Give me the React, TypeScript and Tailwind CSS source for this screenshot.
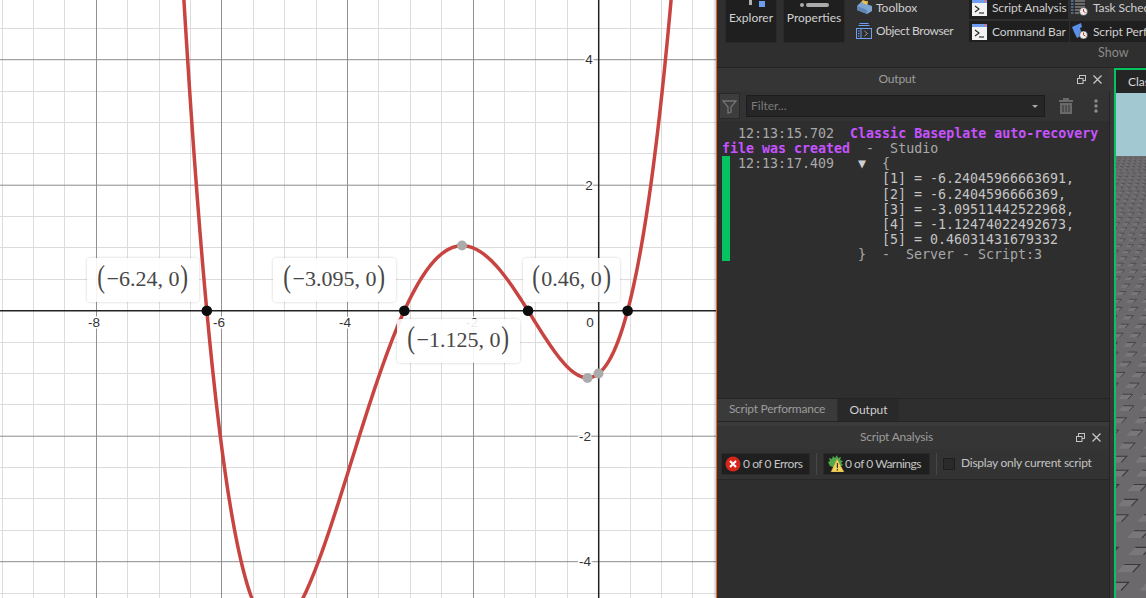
import React from "react";

const X = (v: number) => 598.7 + 62.8 * v;
const Y = (v: number) => 310.7 - 62.75 * v;
const snap = (p: number) => Math.floor(p) + 0.5;
const f = (x: number) => 0.1 * (x + 6.24046) * (x + 3.09511) * (x + 1.12474) * (x - 0.46031);

function range(a: number, b: number, step: number) {
  const out: number[] = [];
  for (let v = a; v <= b + 1e-6; v += step) out.push(v);
  return out;
}

function curvePath() {
  let d = "";
  for (let px = 170; px <= 690; px += 1.5) {
    const v = (px - 598.7) / 62.8;
    d += `${d ? "L" : "M"}${px.toFixed(1)} ${Y(f(v)).toFixed(2)} `;
  }
  return d;
}

function AxisText({ x, y, children }: { x: number; y: number; children: string }) {
  return (
    <text x={x} y={y} textAnchor="middle" fontFamily="Liberation Sans, sans-serif" fontSize="13.5" fill="#333" stroke="#fff" strokeWidth="3" paintOrder="stroke">
      {children}
    </text>
  );
}

function Graph() {
  const minorX = range(-9.5, 1.5, 0.5).filter((v) => Math.abs(v % 2) > 0.01);
  const majorX = [-8, -6, -4, -2];
  const minorY = range(-5, 5, 0.5).filter((v) => Math.abs(v % 2) > 0.01);
  const majorY = [-4, -2, 2, 4];
  return (
    <svg width="716" height="598" className="block">
      <rect width="716" height="598" fill="#fff" />
      {minorX.map((v) => (
        <line key={v} x1={snap(X(v))} x2={snap(X(v))} y1="0" y2="598" stroke="#dcdcdc" />
      ))}
      {minorY.map((v) => (
        <line key={v} y1={snap(Y(v))} y2={snap(Y(v))} x1="0" x2="716" stroke="#dcdcdc" />
      ))}
      {majorX.map((v) => (
        <line key={v} x1={snap(X(v))} x2={snap(X(v))} y1="0" y2="598" stroke="#919191" />
      ))}
      {majorY.map((v) => (
        <line key={v} y1={Y(v)} y2={Y(v)} x1="0" x2="716" stroke="#8c8c8c" />
      ))}
      <line x1="598.7" x2="598.7" y1="0" y2="598" stroke="#222" strokeWidth="1.5" />
      <line x1="0" x2="716" y1="310.7" y2="310.7" stroke="#222" strokeWidth="1.6" />
      <AxisText x={94} y={327}>-8</AxisText>
      <AxisText x={219} y={327}>-6</AxisText>
      <AxisText x={345} y={327}>-4</AxisText>
      <AxisText x={472} y={327}>-2</AxisText>
      <AxisText x={590} y={327}>0</AxisText>
      <AxisText x={589} y={64}>4</AxisText>
      <AxisText x={589} y={190}>2</AxisText>
      <AxisText x={585} y={441}>-2</AxisText>
      <AxisText x={585} y={566}>-4</AxisText>
      <path d={curvePath()} fill="none" stroke="#c74440" strokeWidth="3.5" strokeLinejoin="round" />
      {[
        [462, 245.5],
        [587.5, 378],
        [598.5, 373.5],
      ].map(([x, y]) => (
        <circle key={x} cx={x} cy={y} r="5" fill="#ababab" />
      ))}
      {[-6.24046, -3.09511, -1.12474, 0.46031].map((v) => (
        <circle key={v} cx={X(v)} cy="310.7" r="5.3" fill="#0d0d0d" />
      ))}
    </svg>
  );
}

function MathLabel({ text, className }: { text: string; className: string }) {
  return (
    <div className={`absolute h-[44px] pb-[3px] flex items-center justify-center rounded bg-white/90 shadow-[0_0_3px_rgba(0,0,0,0.2)] text-[#474747] font-['Liberation_Serif',serif] text-[22px] ${className}`}>
      <span className="text-[31px] font-light leading-none -mt-1 scale-x-75">(</span>
      <span>{text}</span>
      <span className="text-[31px] font-light leading-none -mt-1 scale-x-75">)</span>
    </div>
  );
}

function WindowIcon() {
  return (
    <svg width="15" height="16" viewBox="0 0 15 16" className="shrink-0">
      <rect x="0" y="0" width="15" height="16" fill="#f2f2f2" />
      <rect x="0" y="0" width="15" height="3" fill="#6f9df2" />
      <rect x="12" y="0" width="2" height="2" fill="#e07070" />
      <path d="M3 6l4 3-4 3" fill="none" stroke="#222" strokeWidth="1.1" />
      <path d="M7 13h5" stroke="#222" strokeWidth="1.1" />
    </svg>
  );
}

function Clock({ cx, cy }: { cx: number; cy: number }) {
  return (
    <g>
      <circle cx={cx} cy={cy} r="4" fill="#eee" stroke="#333" strokeWidth="0.6" />
      <path d={`M${cx} ${cy - 2.5}V${cy}L${cx + 2} ${cy + 1}`} stroke="#c0392b" strokeWidth="1" fill="none" />
    </g>
  );
}

function ToolboxIcon() {
  return (
    <svg width="17" height="15" viewBox="0 0 17 15" className="shrink-0">
      <path d="M1 6l4-4 11 4v5l-5 3-10-4z" fill="#7da3cf" />
      <path d="M1 6l10 4v4l-10-4z" fill="#5e86b4" />
      <path d="M5 2l2-2 5 2-1 3z" fill="#e8c25a" />
      <path d="M9 1h3v3z" fill="#d9a33c" />
    </svg>
  );
}

function ObjectBrowserIcon() {
  return (
    <svg width="16" height="16" viewBox="0 0 16 16" className="shrink-0" fill="none" stroke="#6fa0ee" strokeWidth="1">
      <path d="M3.5 .5h9" />
      <path d="M2.5 2.5h11" />
      <rect x=".5" y="5.5" width="15" height="10" />
      <path d="M5 5.5v10" />
      <path d="M8.5 8l3 2.5-3 2.5" stroke="#9a9a9a" />
      <path d="M2 8h1.5M2 10.5h1.5M2 13h1.5" />
    </svg>
  );
}

function TaskIcon() {
  return (
    <svg width="17" height="16" viewBox="0 0 17 16" className="shrink-0">
      <path d="M4 1h10M4 4h10M4 7h10M4 10h6M4 13h4" stroke="#a8a8a8" strokeWidth="1.2" />
      <path d="M0 1h2.5M0 4h2.5M0 7h2.5M0 10h2.5M0 13h2.5" stroke="#6fa0ee" strokeWidth="1.2" />
      <Clock cx={12.5} cy={11.5} />
    </svg>
  );
}

function PerfIcon() {
  return (
    <svg width="17" height="17" viewBox="0 0 17 17" className="shrink-0">
      <path d="M1 4l9-4 1 4-2 1 2 7-5 3-3-6z" fill="#5a8fe8" />
      <Clock cx={12.5} cy={12} />
    </svg>
  );
}

function RibbonBig({ label, children, width }: { label: string; children: React.ReactNode; width: string }) {
  return (
    <div className={`h-[43px] ${width} shrink-0 bg-[#1f1f1f] border border-[#2a2a2a] border-t-0 flex flex-col items-center`}>
      <div className="h-[10px] w-full relative flex justify-center">{children}</div>
      <span className="text-[#d2d2d2] leading-[15px]">{label}</span>
    </div>
  );
}

function RibbonSmall({ icon, label, dark = true, className }: { icon: React.ReactNode; label: string; dark?: boolean; className: string }) {
  return (
    <div className={`flex items-center gap-[5px] whitespace-nowrap ${className} ${dark ? "bg-[#1f1f1f]" : ""}`}>
      {icon}
      <span className="text-[#cfcfcf] tracking-[-0.1px]">{label}</span>
    </div>
  );
}

function Ribbon() {
  return (
    <div className="h-[68px] shrink-0 bg-[#2f2f2f] border-b border-[#242424] relative overflow-hidden flex pl-[8px] font-['Lato',sans-serif] text-[12px]">
      <div className="flex gap-[6px] h-[43px]">
        <RibbonBig label="Explorer" width="w-[52px]">
          <div className="flex gap-[7px] items-start pl-[11px]">
            <div className="w-[3px] h-[5px] bg-[#b0b0b0]" />
            <div className="w-[6px] h-[6px] mt-[1px] bg-[#6f9df2]" />
          </div>
        </RibbonBig>
        <RibbonBig label="Properties" width="w-[62px]">
          <div className="flex gap-[2px] items-center h-[9px] pl-[1px]">
            <div className="w-[4px] h-[4px] rounded-full bg-[#ababab]" />
            <div className="w-[23px] h-[4px] rounded-full bg-[#ababab]" />
          </div>
        </RibbonBig>
      </div>
      <div className="flex flex-col gap-[7px] ml-[11px] w-[113px] shrink-0">
        <div className="flex items-center gap-[3px] h-[15px] text-[#cfcfcf]">
          <ToolboxIcon />
          <span>Toolbox</span>
        </div>
        <div className="flex items-center gap-[4px] h-[16px] mt-[1px] text-[#cfcfcf]">
          <ObjectBrowserIcon />
          <span className="tracking-[-0.35px]">Object Browser</span>
        </div>
      </div>
      <div className="flex flex-col gap-[2px] h-[42px] w-[100px] shrink-0">
        <RibbonSmall icon={<WindowIcon />} label="Script Analysis" className="w-[99px] h-[19px] pb-[3px] pl-[3px]" />
        <RibbonSmall icon={<WindowIcon />} label="Command Bar" className="w-[100px] h-[21px] pl-[3px]" />
      </div>
      <div className="flex flex-col gap-[2px] h-[42px] w-[100px] shrink-0 ml-[2px]">
        <RibbonSmall icon={<TaskIcon />} label="Task Scheduler" dark={false} className="w-[100px] h-[19px] pb-[3px] pl-[1px] -ml-[1px]" />
        <RibbonSmall icon={<PerfIcon />} label="Script Performance" className="w-[110px] h-[21px] pl-[1px] -ml-[1px]" />
      </div>
      <span className="absolute left-[381px] top-[44px] text-[#8a8a8a] text-[12.5px]">Show</span>
    </div>
  );
}

function PanelIcons() {
  return (
    <div className="w-[33px] flex items-center gap-[7px] shrink-0">
      <svg width="9" height="9" viewBox="0 0 9 9" fill="none" stroke="#c4c4c4">
        <rect x="2.5" y=".5" width="6" height="5" />
        <rect x=".5" y="3.5" width="5.5" height="5" fill="#353535" />
      </svg>
      <svg width="9" height="9" viewBox="0 0 9 9" stroke="#c8c8c8" strokeWidth="1.2">
        <path d="M.5 .5l8 8M8.5 .5l-8 8" />
      </svg>
    </div>
  );
}

function TitleBar({ title }: { title: string }) {
  return (
    <div className="h-[23px] shrink-0 bg-[#353535] flex items-center font-['Lato',sans-serif] text-[12px]">
      <div className="flex-1 text-center text-[#9c9c9c] pb-[2px] tracking-[-0.2px]">{title}</div>
      <PanelIcons />
    </div>
  );
}

function OutputLog() {
  const cls = "whitespace-pre";
  return (
    <div className="flex-1 pt-[5px] pl-[5px] bg-[#2e2e2e] font-['DejaVu_Sans_Mono',monospace] text-[13.3px] leading-[15.12px] text-[#a9a9a9] relative overflow-hidden border-r border-[#252525]">
      <div className={cls}>
        {"  12:13:15.702  "}
        <b className="text-[#c653ff]">Classic Baseplate auto-recovery</b>
      </div>
      <div className={cls}>
        <b className="text-[#c653ff]">file was created</b>
        {"  -  Studio"}
      </div>
      <div className="flex">
        <div className="w-[8px] h-[105px] bg-[#05c35f] shrink-0" />
        <div className="pl-[8px]">
          <div className={cls}>
            {"12:13:17.409   "}
            <span className="text-[#cfcfcf]">▼</span>
            {"  {"}
          </div>
          {[
            "[1] = -6.24045966663691,",
            "[2] = -6.2404596666369,",
            "[3] = -3.09511442522968,",
            "[4] = -1.12474022492673,",
            "[5] = 0.46031431679332",
          ].map((t) => (
            <div key={t} className={`${cls} text-[#c4c4c4] pl-[144px]`}>
              {t}
            </div>
          ))}
          <div className={`${cls} pl-[120px]`}>{"}  -  Server - Script:3"}</div>
        </div>
      </div>
    </div>
  );
}

function OutputPanel() {
  return (
    <div className="h-[354px] shrink-0 flex flex-col">
      <TitleBar title="Output" />
      <div className="h-[30px] shrink-0 bg-[#333333] flex items-center pl-[2px] border-r border-[#252525] font-['Lato',sans-serif] text-[12px]">
        <div className="w-[21px] h-[26px] bg-[#3d3d3d] border border-[#292929] flex items-center justify-center">
          <svg width="15" height="15" viewBox="0 0 15 15" fill="none" stroke="#747474" strokeWidth="1.3">
            <path d="M1 2h13L9 8v5l-3 1V8z" />
          </svg>
        </div>
        <div className="ml-[6px] w-[299px] h-[22px] bg-[#262626] border border-[#1c1c1c] flex items-center justify-between pl-[4px] pr-[6px] text-[#7a7a7a]">
          <span className="pb-[1px]">Filter...</span>
          <svg width="6" height="3" viewBox="0 0 6 3"><path d="M0 0h6L3 3z" fill="#a8a8a8" /></svg>
        </div>
        <svg width="14" height="16" viewBox="0 0 14 16" className="ml-[14px]" fill="#6a6a6a">
          <path d="M4 0h6v2h4v2H0V2h4z" />
          <path d="M1 5h12v11H1z" />
          <path d="M4 7v7M7 7v7M10 7v7" stroke="#333" />
        </svg>
        <svg width="4" height="14" viewBox="0 0 4 14" className="ml-[21px]" fill="#8c8c8c">
          <circle cx="2" cy="2" r="1.7" />
          <circle cx="2" cy="7" r="1.7" />
          <circle cx="2" cy="12" r="1.7" />
        </svg>
      </div>
      <OutputLog />
      <div className="h-[24px] shrink-0 bg-[#2e2e2e] border-y border-[#242424] border-r flex font-['Lato',sans-serif] text-[12px]">
        <div className="w-[120px] bg-[#3a3a3a] flex items-center justify-center text-[#9c9c9c] tracking-[-0.25px] pb-[2px]">Script Performance</div>
        <div className="w-[61px] ml-[1px] bg-[#292929] flex items-center justify-center text-[#d0d0d0] pb-[1px]">Output</div>
      </div>
    </div>
  );
}

function ErrorIcon() {
  return (
    <svg width="16" height="16" viewBox="0 0 16 16" className="shrink-0">
      <circle cx="8" cy="8" r="7.5" fill="#d6261c" />
      <path d="M5 5l6 6M11 5l-6 6" stroke="#fff" strokeWidth="2" />
    </svg>
  );
}

function WarnIcon() {
  return (
    <svg width="18" height="17" viewBox="0 0 18 17" className="shrink-0">
      <path d="M1 7l2-1-1-3 3 1 1-3 2 2 2-3 1 3 3-1-1 3 3 1-2 2 2 2-4 2H6L3 11z" fill="#4fa84a" />
      <path d="M10 4l7 13H4z" fill="#f2d35b" stroke="#b89a3a" strokeWidth=".5" />
      <path d="M10.4 8v5M10.4 14v1.4" stroke="#333" strokeWidth="1.2" />
    </svg>
  );
}

function ScriptAnalysis() {
  return (
    <div className="flex-1 flex flex-col bg-[#2e2e2e] border-r border-[#252525]">
      <div className="h-[4px] bg-[#3a3a3a] shrink-0" />
      <TitleBar title="Script Analysis" />
      <div className="h-[31px] shrink-0 bg-[#333333] border-b border-[#272727] flex items-center pl-[4px] font-['Lato',sans-serif] text-[12px] text-[#c4c4c4]">
        <div className="w-[89px] h-[22px] bg-[#1f1f1f] border border-[#2a2a2a] flex items-center gap-[2px] pl-[3px] pb-[1px]">
          <ErrorIcon />
          <span className="tracking-[-0.45px]">0 of 0 Errors</span>
        </div>
        <div className="w-px h-[22px] bg-[#484848] ml-[6px]" />
        <div className="w-[107px] h-[22px] ml-[6px] bg-[#1f1f1f] border border-[#2a2a2a] flex items-center pl-[3px] pb-[1px]">
          <WarnIcon />
          <span className="tracking-[-0.5px]">0 of 0 Warnings</span>
        </div>
        <div className="w-px h-[22px] bg-[#484848] ml-[6px]" />
        <div className="w-[12px] h-[12px] ml-[6px] bg-[#2a2a2a] border border-[#1e1e1e]" />
        <span className="ml-[6px] -mt-[2px] tracking-[-0.24px]">Display only current script</span>
      </div>
    </div>
  );
}

function Baseplate() {
  const marks: React.ReactNode[] = [];
  let y = 2;
  let row = 0;
  while (y < 445) {
    const s = 1.6 + y / 46;
    for (let x = -20 + (row % 2) * s * 1.6; x < 40; x += s * 3.2) {
      const px = x + (row % 5) * s * 0.4;
      const h = s * 0.75;
      marks.push(
        <g key={`${row}-${px.toFixed(1)}`}>
          <path d={`M${px} ${y + h}l${s * 0.7} ${-h}h${s * 1.5}l${-s * 0.7} ${h}z`} fill="#7a777a" />
          <path d={`M${px + s * 0.7} ${y}h${s * 1.5}l${-s * 0.7} ${h}`} fill="none" stroke="#3a383a" strokeWidth={Math.min(1.2, 0.4 + y / 500)} />
        </g>
      );
    }
    y += s * 1.7;
    row++;
  }
  return (
    <svg className="block w-full flex-1" viewBox="0 0 32 441" preserveAspectRatio="xMinYMin slice">
      <rect width="32" height="441" fill="#6c696c" />
      {marks}
    </svg>
  );
}

function Viewport() {
  return (
    <div className="flex-1 min-w-0 flex flex-col border-l-2 border-t-2 border-[#05c35f] overflow-hidden">
      <div className="h-[23px] shrink-0 bg-[#252525] pl-[12px] text-[#d8d8d8] font-['Lato',sans-serif] text-[12px] leading-[23px] whitespace-nowrap overflow-hidden">Classic Baseplate</div>
      <div className="h-[63px] shrink-0 bg-[#a2c9d2]" />
      <Baseplate />
    </div>
  );
}

export default function App() {
  return (
    <div className="w-[1146px] h-[598px] flex overflow-hidden bg-[#383838]">
      <div className="relative w-[716px] h-[598px] shrink-0 overflow-hidden">
        <Graph />
        <MathLabel text="−6.24, 0" className="left-[87px] top-[258px] w-[112px]" />
        <MathLabel text="−3.095, 0" className="left-[273px] top-[258px] w-[123px]" />
        <MathLabel text="−1.125, 0" className="left-[397px] top-[319px] w-[123px]" />
        <MathLabel text="0.46, 0" className="left-[523px] top-[258px] w-[97px]" />
        <div className="absolute right-0 top-0 h-full w-[3px] bg-gradient-to-r from-transparent to-black/20" />
      </div>
      <div className="w-px shrink-0 bg-[#f26522]" />
      <div className="flex-1 min-w-0 flex flex-col">
        <Ribbon />
        <div className="flex-1 min-h-0 flex gap-[4px]">
          <div className="w-[393px] shrink-0 flex flex-col">
            <OutputPanel />
            <ScriptAnalysis />
          </div>
          <Viewport />
        </div>
      </div>
    </div>
  );
}
